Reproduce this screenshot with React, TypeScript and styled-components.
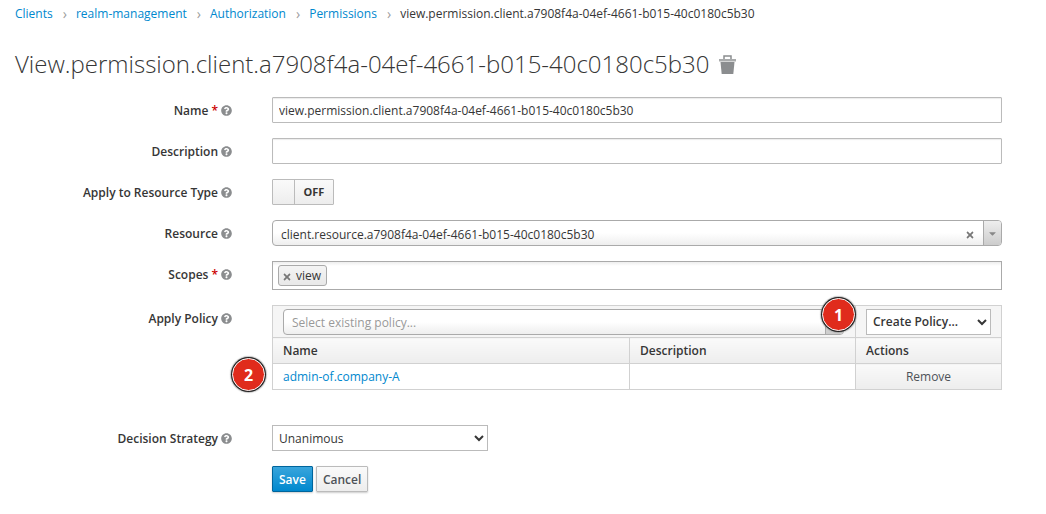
import React from 'react';
import styled, { createGlobalStyle } from 'styled-components';
import { FaQuestionCircle, FaTimes, FaCaretDown } from 'react-icons/fa';

const GlobalStyle = createGlobalStyle`
  html, body {
    margin: 0;
    padding: 0;
    background: #fff;
    font-family: "Open Sans", "Liberation Sans", sans-serif;
    font-size: 12px;
    color: #363636;
  }
  * { box-sizing: border-box; }
`;

const Page = styled.div`
  position: relative;
  width: 1046px;
  height: 514px;
  padding: 0 44px 0 15px;
  overflow: hidden;
`;

const Breadcrumb = styled.ol`
  display: flex;
  align-items: center;
  height: 28px;
  margin: 0;
  padding: 0;
  list-style: none;
  line-height: 28px;
`;

const Crumb = styled.li`
  display: flex;
  align-items: center;
  &:not(:last-child)::after {
    content: "›";
    margin: 0 9px 0 10px;
    color: #9c9c9c;
    font-size: 14px;
    line-height: 1;
  }
`;

const Link = styled.a`
  color: #0088ce;
  text-decoration: none;
`;

const Title = styled.h1`
  display: flex;
  align-items: center;
  height: 33px;
  margin: 19px 0 17px;
  font-size: 24px;
  font-weight: 300;
  line-height: 33px;
  color: #363636;
`;

const TrashIcon = styled.svg`
  width: 17px;
  height: 19px;
  margin: 2px 0 0 10px;
  color: #8b8d8f;
`;

const Form = styled.form`
  display: flex;
  flex-direction: column;
  margin: 0;
`;

const Row = styled.div<{ $gap?: number }>`
  display: grid;
  grid-template-columns: 217px 730px;
  column-gap: 40px;
  margin-bottom: ${p => p.$gap ?? 15}px;
`;

const Label = styled.label`
  display: flex;
  align-self: start;
  align-items: center;
  justify-content: flex-end;
  height: 27px;
  margin-bottom: -1px;
  padding-top: 1px;
  font-weight: 600;
  color: #363636;
  line-height: 26px;
  white-space: nowrap;
`;

const Required = styled.span`
  margin-left: 3px;
  color: #c00;
  font-weight: 600;
`;

const Help = styled(FaQuestionCircle)`
  margin: -2px 0 0 3px;
  color: #8b8d8f;
  font-size: 11px;
`;

const TextInput = styled.input`
  display: block;
  width: 100%;
  height: 26px;
  padding: 2px 6px;
  border: 1px solid #bbb;
  border-radius: 1px;
  outline: none;
  background: #fff;
  font: inherit;
  color: #363636;
  box-shadow: inset 0 1px 1px rgba(3, 3, 3, 0.08);
`;

const Switch = styled.div`
  display: flex;
  width: 62px;
  height: 26px;
  border: 1px solid #bbb;
  border-radius: 1px;
  overflow: hidden;
`;

const SwitchHandle = styled.div`
  width: 22px;
  border-right: 1px solid #bbb;
  background: linear-gradient(to bottom, #fafafa, #ededed);
`;

const SwitchLabel = styled.div`
  flex: 1;
  text-align: center;
  font-size: 11px;
  font-weight: 700;
  line-height: 24px;
  color: #363636;
  background: linear-gradient(to bottom, #fafafa, #ededed);
`;

const Select2Box = styled.div<{ $width?: number }>`
  display: flex;
  align-items: center;
  width: ${p => (p.$width ? `${p.$width}px` : 'auto')};
  height: 26px;
  padding-left: 8px;
  border: 1px solid #aaa;
  border-radius: 4px;
  background: linear-gradient(to bottom, #fff 0%, #fff 50%, #eee 100%);
  color: #363636;
`;

const Select2Text = styled.span<{ $placeholder?: boolean }>`
  flex: 1;
  padding-top: 2px;
  font-weight: 400;
  color: ${p => (p.$placeholder ? '#999' : '#363636')};
`;

const Select2Clear = styled(FaTimes)`
  margin: 3px 8px 0 0;
  color: #777;
  font-size: 10px;
`;

const Select2Arrow = styled.span`
  display: flex;
  align-items: center;
  justify-content: center;
  width: 18px;
  height: 100%;
  border-left: 1px solid #aaa;
  background: linear-gradient(to bottom, #eee, #ccc);
  border-radius: 0 3px 3px 0;
  color: #888;
  font-size: 11px;
`;

const TagsBox = styled.div`
  display: flex;
  align-items: center;
  height: 29px;
  padding-left: 5px;
  border: 1px solid #aaa;
  background: linear-gradient(to bottom, #eee 0%, #fff 15%);
`;

const Tag = styled.span`
  display: flex;
  align-items: center;
  height: 21px;
  padding: 0 5px 0 3px;
  border: 1px solid #aaa;
  border-radius: 3px;
  background: linear-gradient(to bottom, #f4f4f4, #e8e8e8);
  svg {
    margin: 2px 4px 0 0;
    color: #777;
    font-size: 10px;
  }
`;

const PolicyTable = styled.table`
  width: 729px;
  table-layout: fixed;
  border-collapse: collapse;
`;

const Col = styled.col<{ $width: number }>`
  width: ${p => p.$width}px;
`;

const ToolbarCell = styled.td`
  height: 32px;
  padding: 2px 10px;
  background: #f5f5f5;
  border: 1px solid #d1d1d1;
`;

const HeadCell = styled.th`
  height: 26px;
  padding: 0 10px;
  text-align: left;
  font-weight: 600;
  background: linear-gradient(to bottom, #fafafa, #ededed);
  border: 1px solid #d1d1d1;
`;

const BodyCell = styled.td`
  height: 26px;
  padding: 0 10px;
  border: 1px solid #d1d1d1;
`;

const RemoveCell = styled.td`
  height: 26px;
  padding: 0;
  text-align: center;
  color: #4d5258;
  background: linear-gradient(to bottom, #fafafa, #ededed);
  border: 1px solid #d1d1d1;
`;

const NativeSelect = styled.select<{ $width: number; $bold?: boolean }>`
  display: block;
  width: ${p => p.$width}px;
  height: 26px;
  padding: 0 2px;
  border: 1px solid #bbb;
  border-radius: 0;
  outline: none;
  background: #fff;
  font: inherit;
  font-weight: ${p => (p.$bold ? 600 : 400)};
  color: #363636;
`;

const Buttons = styled.div`
  display: flex;
  gap: 3px;
`;

const Button = styled.button<{ $primary?: boolean }>`
  height: 26px;
  padding: 0 6px;
  border: 1px solid ${p => (p.$primary ? '#00659c' : '#bbb')};
  border-radius: 1px;
  font: inherit;
  font-weight: 600;
  color: ${p => (p.$primary ? '#fff' : '#4d5258')};
  background: ${p =>
    p.$primary
      ? 'linear-gradient(to bottom, #39a5dc, #0088ce)'
      : 'linear-gradient(to bottom, #fafafa, #ededed)'};
  box-shadow: 0 1px 2px rgba(3, 3, 3, 0.2);
`;

const Marker = styled.span<{ $x: number; $y: number }>`
  position: absolute;
  left: ${p => p.$x}px;
  top: ${p => p.$y}px;
  display: flex;
  align-items: center;
  justify-content: center;
  width: 33px;
  height: 33px;
  border-radius: 50%;
  background: #e02b1c;
  border: 1px solid #fff;
  color: #fff;
  font-size: 16px;
  font-weight: 700;
  box-shadow: 0 0 0 1px #222, 0 0 1px 2px rgba(120, 120, 120, 0.45);
`;

const crumbs = ['Clients', 'realm-management', 'Authorization', 'Permissions'];
const fullName = 'view.permission.client.a7908f4a-04ef-4661-b015-40c0180c5b30';

export default function App() {
  return (
    <Page>
      <GlobalStyle />
      <Breadcrumb>
        {crumbs.map(c => (
          <Crumb key={c}>
            <Link href="#">{c}</Link>
          </Crumb>
        ))}
        <Crumb>{fullName}</Crumb>
      </Breadcrumb>

      <Title>
        View.permission.client.a7908f4a-04ef-4661-b015-40c0180c5b30
        <TrashIcon viewBox="0 0 17 19">
          <path d="M5 4V1h7v3" fill="none" stroke="currentColor" strokeWidth="1.5" />
          <path d="M0 4h17v2.5H0z" fill="currentColor" opacity="0.75" />
          <path d="M1.5 7h14l-1.2 12H2.7z" fill="currentColor" />
        </TrashIcon>
      </Title>

      <Form>
        <Row>
          <Label>Name<Required>*</Required><Help /></Label>
          <TextInput defaultValue={fullName} />
        </Row>
        <Row>
          <Label>Description<Help /></Label>
          <TextInput />
        </Row>
        <Row>
          <Label>Apply to Resource Type<Help /></Label>
          <Switch>
            <SwitchHandle />
            <SwitchLabel>OFF</SwitchLabel>
          </Switch>
        </Row>
        <Row>
          <Label>Resource<Help /></Label>
          <Select2Box>
            <Select2Text>client.resource.a7908f4a-04ef-4661-b015-40c0180c5b30</Select2Text>
            <Select2Clear />
            <Select2Arrow><FaCaretDown /></Select2Arrow>
          </Select2Box>
        </Row>
        <Row>
          <Label>Scopes<Required>*</Required><Help /></Label>
          <TagsBox>
            <Tag><FaTimes />view</Tag>
          </TagsBox>
        </Row>
        <Row $gap={35}>
          <Label>Apply Policy<Help /></Label>
          <PolicyTable>
            <colgroup>
              <Col $width={357} />
              <Col $width={226} />
              <Col $width={146} />
            </colgroup>
            <tbody>
              <tr>
                <ToolbarCell colSpan={2}>
                  <Select2Box $width={561}>
                    <Select2Text $placeholder>Select existing policy...</Select2Text>
                    <Select2Arrow />
                  </Select2Box>
                </ToolbarCell>
                <ToolbarCell>
                  <NativeSelect $width={125} $bold defaultValue="create">
                    <option value="create">Create Policy...</option>
                  </NativeSelect>
                </ToolbarCell>
              </tr>
              <tr>
                <HeadCell>Name</HeadCell>
                <HeadCell>Description</HeadCell>
                <HeadCell>Actions</HeadCell>
              </tr>
              <tr>
                <BodyCell><Link href="#">admin-of.company-A</Link></BodyCell>
                <BodyCell />
                <RemoveCell>Remove</RemoveCell>
              </tr>
            </tbody>
          </PolicyTable>
        </Row>
        <Row>
          <Label>Decision Strategy<Help /></Label>
          <NativeSelect $width={216} defaultValue="unanimous">
            <option value="unanimous">Unanimous</option>
          </NativeSelect>
        </Row>
        <Row>
          <span />
          <Buttons>
            <Button type="button" $primary>Save</Button>
            <Button type="button">Cancel</Button>
          </Buttons>
        </Row>
      </Form>

      <Marker $x={822} $y={298}>1</Marker>
      <Marker $x={232} $y={358}>2</Marker>
    </Page>
  );
}
